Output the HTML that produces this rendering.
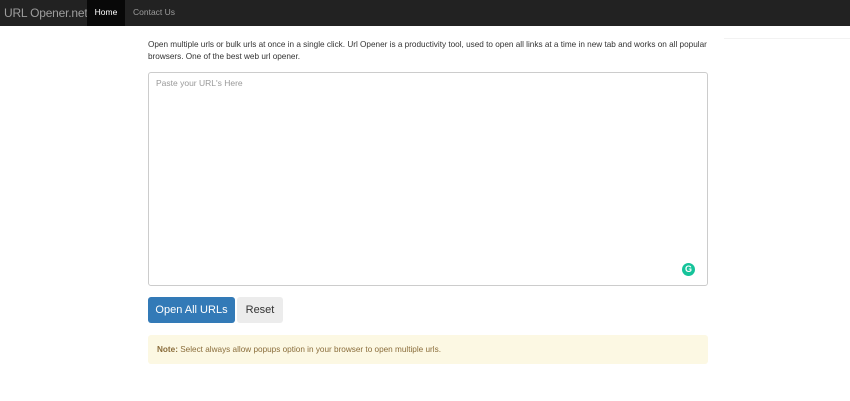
<!DOCTYPE html>
<html><head><meta charset="utf-8"><style>
body{margin:0;width:850px;height:401px;background:#fff;font-family:"Liberation Sans",sans-serif;overflow:hidden;position:relative}
.nav{position:absolute;left:0;top:0;width:850px;height:26px;background:#222}
.brand{position:absolute;left:4px;top:6px;font-size:12px;color:#9d9d9d;letter-spacing:-0.2px}
.home{position:absolute;left:87px;top:0;width:38px;height:26px;background:#080808;color:#fff;font-size:8.5px;line-height:25px;text-align:center}
.contact{position:absolute;left:133px;top:0;color:#9d9d9d;font-size:8.5px;line-height:25px}
.p{position:absolute;left:148px;top:39px;width:570px;font-size:8.2px;line-height:11.5px;color:#333}
.ta{position:absolute;left:148px;top:72px;width:558px;height:212px;border:1px solid #ccc;border-radius:3px}
.ph{position:absolute;left:7px;top:5px;font-size:8.5px;color:#999}
.g{position:absolute;left:533px;top:190px;width:13px;height:13px;border-radius:50%;background:#15c39a;color:#fff;font-size:9px;font-weight:bold;text-align:center;line-height:13px}
.b1{position:absolute;left:148px;top:297px;width:87px;height:26px;background:#337ab7;border-radius:3px;color:#fff;font-size:11px;line-height:26px;text-align:center}
.b2{position:absolute;left:237px;top:297px;width:46px;height:26px;background:#ececec;border-radius:3px;color:#333;font-size:11px;line-height:26px;text-align:center}
.note{position:absolute;left:148px;top:335px;width:560px;height:29px;background:#fcf8e3;border-radius:3px;color:#8a6d3b;font-size:8.2px;line-height:29px;box-sizing:border-box;padding-left:9px}
.side{position:absolute;left:724px;top:38px;width:126px;height:1px;background:#f2f2f2}
</style></head><body>
<div class="nav"><div class="brand">URL Opener.net</div><div class="home">Home</div><div class="contact">Contact Us</div></div>
<div class="side"></div>
<div class="p">Open multiple urls or bulk urls at once in a single click. Url Opener is a productivity tool, used to open all links at a time in new tab and works on all popular browsers. One of the best web url opener.</div>
<div class="ta"><div class="ph">Paste your URL's Here</div><div class="g">G</div></div>
<div class="b1">Open All URLs</div><div class="b2">Reset</div>
<div class="note"><b>Note:</b> Select always allow popups option in your browser to open multiple urls.</div>
</body></html>
